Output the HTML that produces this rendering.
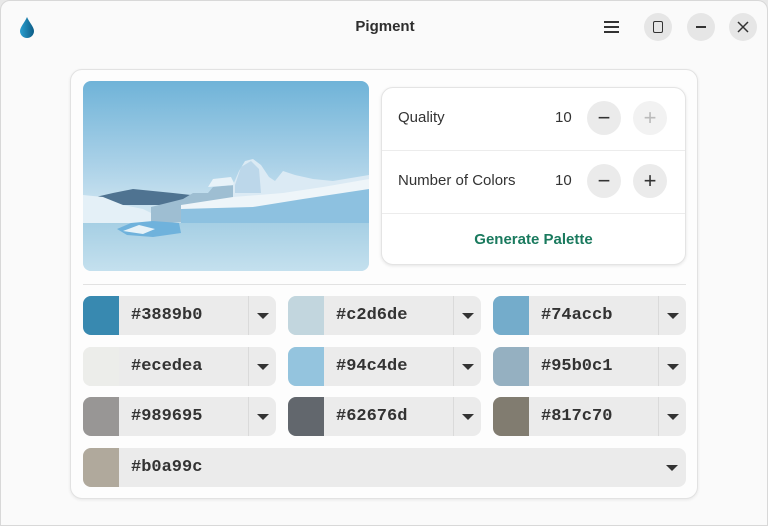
<!DOCTYPE html>
<html><head><meta charset="utf-8"><style>
*{box-sizing:border-box;margin:0;padding:0}
body{width:768px;height:526px;background:#e8e8e8;font-family:"Liberation Sans",sans-serif;overflow:hidden;position:relative}
.win{position:absolute;left:0;top:0;width:768px;height:526px;background:#fafafa;border-radius:10px 10px 0 0;border:1px solid #d8d8d8}
.title{position:absolute;top:17px;left:0;width:768px;text-align:center;font-weight:bold;font-size:15px;color:#2e2e2e}
.wb{position:absolute;top:12px;width:28px;height:28px;border-radius:50%;background:#e6e6e6}
.card{position:absolute;left:70px;top:69px;width:628px;height:430px;background:#fdfdfd;border:1px solid #e2e2e2;border-radius:12px;box-shadow:0 1px 3px rgba(0,0,0,.08)}
.img{position:absolute;left:83px;top:81px;width:286px;height:190px;border-radius:8px;overflow:hidden}
.box{position:absolute;left:381px;top:87px;width:305px;height:178px;background:#fff;border:1px solid #e4e4e4;border-radius:12px;box-shadow:0 1px 3px rgba(0,0,0,.1)}
.lbl{position:absolute;left:16px;font-size:15px;color:#333}
.num{position:absolute;left:173px;font-size:15px;color:#333}
.cb{position:absolute;width:34px;height:34px;border-radius:50%;background:#ebebeb;text-align:center;line-height:34px;font-size:22px;color:#333}
.sep{position:absolute;left:0;width:100%;height:1px;background:#ececec}
.gen{position:absolute;top:143px;width:100%;text-align:center;font-weight:bold;font-size:15px;color:#1a7a5e}
.hr{position:absolute;left:83px;top:284px;width:603px;height:1px;background:#e2e2e2}
.sw{position:absolute;height:39px;border-radius:8px;background:#ebebeb;overflow:hidden}
.sw .c{position:absolute;left:0;top:0;width:36px;height:100%}
.sw .t{position:absolute;left:48px;top:10px;font-family:"Liberation Mono",monospace;font-weight:bold;font-size:17px;color:#333}
.sw .d{position:absolute;right:0;top:0;width:28px;height:100%;border-left:1px solid #dadada}
.sw .d:after{content:"";position:absolute;left:8px;top:17px;border-left:6px solid transparent;border-right:6px solid transparent;border-top:6px solid #333}
</style></head><body>
<div class="win">
<svg style="position:absolute;left:18px;top:15px" width="16" height="22" viewBox="0 0 16 22"><defs><linearGradient id="dg" x1="0" x2="1"><stop offset="0" stop-color="#2a9fd0"/><stop offset="1" stop-color="#0c5c86"/></linearGradient></defs><path d="M8 1C6 6 1 11 1 15a7 7 0 0 0 14 0C15 11 10 6 8 1z" fill="url(#dg)"/></svg>
<div class="title">Pigment</div>
<svg style="position:absolute;left:603px;top:19px" width="16" height="14"><rect x="0" y="1" width="15" height="2" fill="#333"/><rect x="0" y="6" width="15" height="2" fill="#333"/><rect x="0" y="11" width="15" height="2" fill="#333"/></svg>
<div class="wb" style="left:643px"><div style="position:absolute;left:9px;top:8px;width:10px;height:12px;border:1.5px solid #333;border-radius:2px"></div></div>
<div class="wb" style="left:686px"><div style="position:absolute;left:9px;top:13px;width:10px;height:1.5px;background:#333"></div></div>
<div class="wb" style="left:728px"><svg style="position:absolute;left:8px;top:8px" width="12" height="12"><path d="M1 1L11 11M11 1L1 11" stroke="#333" stroke-width="1.5"/></svg></div>
</div>
<div class="card"></div>
<div class="img"><svg width="286" height="190" viewBox="0 0 286 190">
<defs><linearGradient id="sky" x1="0" y1="0" x2="0" y2="1"><stop offset="0" stop-color="#6fb3d8"/><stop offset=".45" stop-color="#acd2e8"/><stop offset=".75" stop-color="#d8eaf3"/></linearGradient>
<linearGradient id="wat" x1="0" y1="0" x2="0" y2="1"><stop offset="0" stop-color="#a6cfe4"/><stop offset="1" stop-color="#c4e0ee"/></linearGradient></defs>
<rect width="286" height="190" fill="url(#sky)"/>
<path d="M4 118L30 112L50 108L70 110L90 112L108 114L108 124L4 124z" fill="#4f7391"/>
<path d="M0 114L20 116L40 124L60 128L68 132L68 142L0 142z" fill="#e4f0f7"/>
<path d="M68 126L100 118L110 112L125 112L130 106L150 104L152 140L68 142z" fill="#9ebed2"/>
<path d="M125 106L130 98L148 96L152 104z" fill="#e8f2f8"/>
<path d="M150 104L156 90L162 80L170 78L178 84L186 96L192 100L200 90L212 94L230 98L250 100L286 94L286 142L150 142z" fill="#dbeaf4"/>
<path d="M152 104L158 86L168 80L176 88L178 112L152 112z" fill="#bcd7ea"/>
<path d="M98 124L150 116L200 112L240 106L286 98L286 142L98 142z" fill="#eef5f9"/>
<path d="M98 128L170 126L220 118L286 108L286 142L98 142z" fill="#8dc1e0"/>
<rect y="142" width="286" height="48" fill="url(#wat)"/>
<path d="M34 148L48 142L70 140L96 142L98 152L70 156L44 154z" fill="#6fb2dc"/>
<path d="M40 150L56 144L72 148L60 153z" fill="#e6f2f8"/>
</svg></div>
<div class="box">
<div class="lbl" style="top:21px">Quality</div><div class="num" style="top:21px">10</div>
<div class="cb" style="left:205px;top:13px">−</div>
<div class="cb" style="left:251px;top:13px;background:#f2f2f2;color:#bbb">+</div>
<div class="sep" style="top:62px"></div>
<div class="lbl" style="top:84px">Number of Colors</div><div class="num" style="top:84px">10</div>
<div class="cb" style="left:205px;top:76px">−</div>
<div class="cb" style="left:251px;top:76px">+</div>
<div class="sep" style="top:125px"></div>
<div class="gen">Generate Palette</div>
</div>
<div class="hr"></div>

<div class="sw" style="left:83px;top:296px;width:193px"><div class="c" style="background:#3889b0"></div><div class="t">#3889b0</div><div class="d"></div></div>
<div class="sw" style="left:288px;top:296px;width:193px"><div class="c" style="background:#c2d6de"></div><div class="t">#c2d6de</div><div class="d"></div></div>
<div class="sw" style="left:493px;top:296px;width:193px"><div class="c" style="background:#74accb"></div><div class="t">#74accb</div><div class="d"></div></div>
<div class="sw" style="left:83px;top:347px;width:193px"><div class="c" style="background:#ecedea"></div><div class="t">#ecedea</div><div class="d"></div></div>
<div class="sw" style="left:288px;top:347px;width:193px"><div class="c" style="background:#94c4de"></div><div class="t">#94c4de</div><div class="d"></div></div>
<div class="sw" style="left:493px;top:347px;width:193px"><div class="c" style="background:#95b0c1"></div><div class="t">#95b0c1</div><div class="d"></div></div>
<div class="sw" style="left:83px;top:397px;width:193px"><div class="c" style="background:#989695"></div><div class="t">#989695</div><div class="d"></div></div>
<div class="sw" style="left:288px;top:397px;width:193px"><div class="c" style="background:#62676d"></div><div class="t">#62676d</div><div class="d"></div></div>
<div class="sw" style="left:493px;top:397px;width:193px"><div class="c" style="background:#817c70"></div><div class="t">#817c70</div><div class="d"></div></div>
<div class="sw" style="left:83px;top:448px;width:603px"><div class="c" style="background:#b0a99c"></div><div class="t">#b0a99c</div><div class="d" style="border-left:none"></div></div>
</body></html>
